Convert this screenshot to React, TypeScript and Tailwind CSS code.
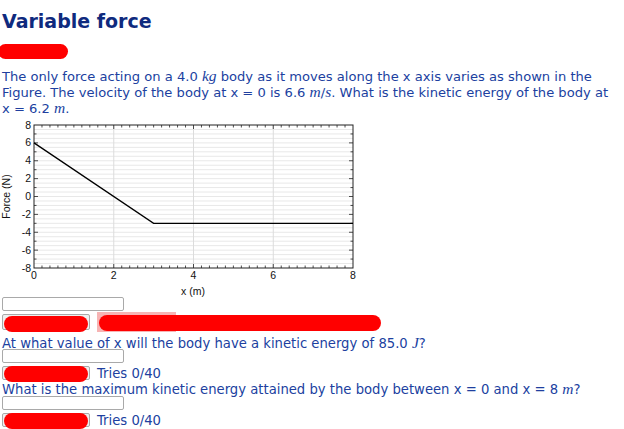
import React from 'react';

const FONT = { fontFamily: '"DejaVu Sans", Verdana, sans-serif' };
const MATH = { fontFamily: '"Liberation Serif", "Times New Roman", serif' };

// plot geometry (svg coordinates)
const L = 34;
const R = 353;
const T = 8;
const B = 151;
const px = (x: number) => L + ((R - L) * x) / 8;
const py = (y: number) => T + ((B - T) * (8 - y)) / 16;

const M: React.FC<{ children: React.ReactNode }> = ({ children }) => (
  <span className="italic text-[15.5px] leading-[10px]" style={MATH}>{children}</span>
);

const Scribble: React.FC<{ className?: string }> = ({ className }) => (
  <div className={`bg-[#ff0000] rounded-full ${className}`} />
);

const AnswerBox = () => (
  <div className="w-[122px] h-[14px] border border-[#a9a9a9] rounded-[2px] bg-white ml-[2px]" />
);

const TriesRow = () => (
  <div className="flex items-center h-[14px] mt-[3px] ml-[2px]">
    <div className="relative w-[88px] h-[14px] border border-[#a9a9a9] rounded-[2px] bg-[#efefef]">
      <Scribble className="absolute left-[1px] -top-[1px] w-[84px] h-[16px]" />
    </div>
    <span className="ml-[7px] text-[13.2px] leading-[14px] pt-[1px]">Tries 0/40</span>
  </div>
);

const Question: React.FC<{ children: React.ReactNode; className?: string }> = ({ children, className }) => (
  <div className={`text-[13.2px] pl-[2px] whitespace-nowrap ${className}`}>{children}</div>
);

const ForceGraph = () => {
  const hGrid: number[] = [];
  for (let v = -7.5; v < 8; v += 0.5) hGrid.push(v);
  const yTicks: number[] = [];
  for (let v = -7; v < 8; v += 1) yTicks.push(v);
  const xTicks: number[] = [];
  for (let i = 1; i < 40; i++) xTicks.push(i * 0.2);
  const yLabels = [8, 6, 4, 2, 0, -2, -4, -6, -8];
  return (
    <svg width="380" height="180" className="block">
      <rect x={L} y={T} width={R - L} height={B - T} fill="#fff" />
      {hGrid.map((v) => (
        <line key={`h${v}`} x1={L} x2={R} y1={py(v)} y2={py(v)} stroke="#e8e8e8" strokeWidth="1" />
      ))}
      {[2, 4, 6].map((v) => (
        <line key={`v${v}`} x1={px(v)} x2={px(v)} y1={T} y2={B} stroke="#dcdcdc" strokeWidth="1" />
      ))}
      {yTicks.map((v) => {
        const len = v % 2 === 0 ? 4 : 2.5;
        return (
          <g key={`yt${v}`}>
            <line x1={L} x2={L + len} y1={py(v)} y2={py(v)} stroke="#222" strokeWidth="0.8" />
            <line x1={R} x2={R - len} y1={py(v)} y2={py(v)} stroke="#222" strokeWidth="0.8" />
          </g>
        );
      })}
      {xTicks.map((v) => {
        const major = Math.abs(v - Math.round(v / 2) * 2) < 0.01;
        const len = major ? 4 : 2.5;
        return (
          <g key={`xt${v.toFixed(1)}`}>
            <line x1={px(v)} x2={px(v)} y1={B} y2={B - len} stroke="#222" strokeWidth="0.8" />
            <line x1={px(v)} x2={px(v)} y1={T} y2={T + len} stroke="#222" strokeWidth="0.8" />
          </g>
        );
      })}
      <rect x={L} y={T} width={R - L} height={B - T} fill="none" stroke="#222" strokeWidth="1" />
      <polyline
        points={`${px(0)},${py(6)} ${px(3)},${py(-3)} ${px(8)},${py(-3)}`}
        fill="none"
        stroke="#000"
        strokeWidth="1.3"
      />
      <g fontFamily='"Liberation Sans", Arial, sans-serif' fontSize="10.5" fill="#111">
        {yLabels.map((v) => (
          <text key={`yl${v}`} x={L - 3} y={py(v) + 3.5} textAnchor="end">{v}</text>
        ))}
        {[0, 2, 4, 6, 8].map((v) => (
          <text key={`xl${v}`} x={px(v)} y={B + 11} textAnchor="middle">{v}</text>
        ))}
        <text x={193} y={178} textAnchor="middle">x (m)</text>
        <text x={10} y={(T + B) / 2} textAnchor="middle" transform={`rotate(-90 10 ${(T + B) / 2})`}>
          Force (N)
        </text>
      </g>
    </svg>
  );
};

export default function App() {
  return (
    <div className="w-[624px] h-[429px] bg-white overflow-hidden text-[#203f9f]" style={FONT}>
      <h1 className="text-[19px] leading-[24px] font-bold text-[#0f2a7e] pt-[9px] pl-[2px]">Variable force</h1>
      <Scribble className="w-[70px] h-[15px] mt-[11px] -ml-[2px]" />
      <p className="text-[13.1px] leading-[16px] mt-[10px] pl-[2px] whitespace-nowrap">
        The only force acting on a 4.0 <M>kg</M> body as it moves along the x axis varies as shown in the
        <br />
        Figure. The velocity of the body at x = 0 is 6.6 <M>m</M>/<M>s</M>. What is the kinetic energy of the body at
        <br />
        x = 6.2 <M>m</M>.
      </p>
      <ForceGraph />
      <AnswerBox />
      <div className="flex items-center h-[22px] ml-[2px]">
        <div className="relative w-[88px] h-[16px] border border-[#a9a9a9] rounded-[2px] bg-[#efefef]">
          <Scribble className="absolute left-[1px] top-[1px] w-[84px] h-[16px]" />
        </div>
        <div className="relative ml-[7px] w-[79px] h-[20px] bg-[#f7b4b4]">
          <Scribble className="absolute left-[2px] top-[3px] w-[282px] h-[16px]" />
        </div>
      </div>
      <Question className="mt-[5px] h-[11px] leading-[11px]">
        At what value of x will the body have a kinetic energy of 85.0 <M>J</M>?
      </Question>
      <AnswerBox />
      <TriesRow />
      <Question className="mt-[3px] h-[13px] leading-[13px]">
        What is the maximum kinetic energy attained by the body between x = 0 and x = 8 <M>m</M>?
      </Question>
      <AnswerBox />
      <TriesRow />
    </div>
  );
}
